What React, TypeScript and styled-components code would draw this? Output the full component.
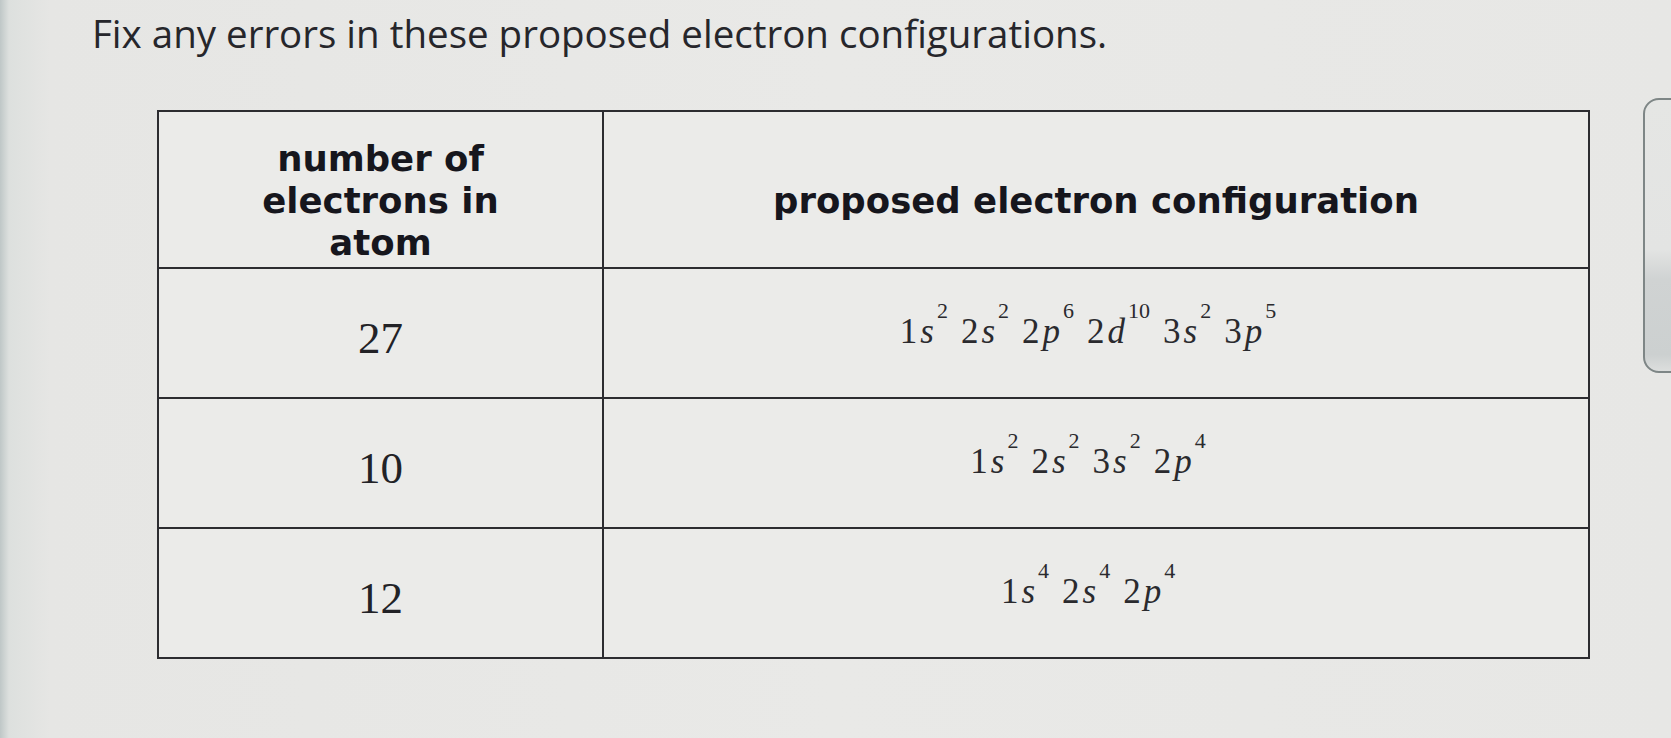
import React from "react";
import styled, { createGlobalStyle } from "styled-components";

const Global = createGlobalStyle`
  html, body { margin: 0; padding: 0; }
  body {
    width: 1671px;
    height: 738px;
    overflow: hidden;
    background: linear-gradient(90deg, #bfc7c7 0px, #dde0de 9px, #e6e6e4 50px, #e9e9e7 50%, #e7e7e5 100%);
  }
`;

const Page = styled.div`
  display: flex;
  width: 1671px;
  height: 738px;
  overflow: hidden;
`;

const Main = styled.main`
  flex: 0 0 1643px;
  box-sizing: border-box;
  padding: 11px 0 0 92px;
`;

const Title = styled.h1`
  margin: 0;
  font-family: "Open Sans", "DejaVu Sans", sans-serif;
  font-weight: 400;
  font-size: 38.5px;
  line-height: 44px;
  color: #26262b;
`;

const Table = styled.table`
  border-collapse: collapse;
  table-layout: fixed;
  width: 1431px;
  margin: 55px 0 0 65px;
  background: #ebebe9;
`;

const HeadCell = styled.th<{ $w: number; $px: number }>`
  width: ${(p) => p.$w}px;
  height: 157px;
  box-sizing: border-box;
  padding: 22px ${(p) => p.$px}px 0;
  border: 2px solid #2c2c30;
  font-family: "DejaVu Sans", "Verdana", sans-serif;
  font-weight: 700;
  font-size: 35.5px;
  line-height: 42px;
  color: #16161d;
  text-align: center;
  vertical-align: middle;
`;

const Row = styled.tr<{ $h: number }>`
  height: ${(p) => p.$h}px;
`;

const NumCell = styled.td`
  box-sizing: border-box;
  padding: 10px 0 0;
  border: 2px solid #2c2c30;
  font-family: "Liberation Serif", "Times New Roman", serif;
  font-size: 45px;
  color: #222226;
  text-align: center;
  vertical-align: middle;
`;

const ConfigCell = styled.td`
  box-sizing: border-box;
  padding: 0 16px 16px 0;
  border: 2px solid #2c2c30;
  font-family: "Liberation Serif", "Times New Roman", serif;
  font-size: 35px;
  color: #2a2a2e;
  text-align: center;
  vertical-align: middle;
  white-space: nowrap;
`;

const Term = styled.span`
  display: inline-block;
  margin-right: 13px;
  &:last-child { margin-right: 0; }
`;

const Orbital = styled.i`
  font-style: italic;
  margin-left: 3px;
`;

const Exp = styled.span`
  font-size: 22px;
  vertical-align: 25px;
  margin-left: 3px;
`;

const Aside = styled.aside`
  flex: 1 0 28px;
  padding-top: 98px;
`;

const SideCard = styled.div`
  width: 80px;
  height: 275px;
  box-sizing: border-box;
  border: 2px solid #7e8686;
  border-radius: 16px;
  background: linear-gradient(180deg, #e5e6e4 0%, #e3e4e3 55%, #d0d3d3 66%, #ccd0d0 94%, #dcdedd 100%);
`;

type T = [string, string, string];

const rows: { n: string; cfg: T[]; h: number }[] = [
  {
    n: "27",
    h: 130,
    cfg: [
      ["1", "s", "2"],
      ["2", "s", "2"],
      ["2", "p", "6"],
      ["2", "d", "10"],
      ["3", "s", "2"],
      ["3", "p", "5"],
    ],
  },
  {
    n: "10",
    h: 130,
    cfg: [
      ["1", "s", "2"],
      ["2", "s", "2"],
      ["3", "s", "2"],
      ["2", "p", "4"],
    ],
  },
  {
    n: "12",
    h: 130,
    cfg: [
      ["1", "s", "4"],
      ["2", "s", "4"],
      ["2", "p", "4"],
    ],
  },
];

export default function App() {
  return (
    <>
      <Global />
      <Page>
        <Main>
          <Title>Fix any errors in these proposed electron configurations.</Title>
          <Table>
            <thead>
              <tr>
                <HeadCell $w={445} $px={70}>number of electrons in atom</HeadCell>
                <HeadCell $w={986} $px={10}>proposed electron configuration</HeadCell>
              </tr>
            </thead>
            <tbody>
              {rows.map((r) => (
                <Row key={r.n} $h={r.h}>
                  <NumCell>{r.n}</NumCell>
                  <ConfigCell>
                    {r.cfg.map(([shell, orb, e], i) => (
                      <Term key={i}>
                        {shell}
                        <Orbital>{orb}</Orbital>
                        <Exp>{e}</Exp>
                      </Term>
                    ))}
                  </ConfigCell>
                </Row>
              ))}
            </tbody>
          </Table>
        </Main>
        <Aside>
          <SideCard />
        </Aside>
      </Page>
    </>
  );
}
